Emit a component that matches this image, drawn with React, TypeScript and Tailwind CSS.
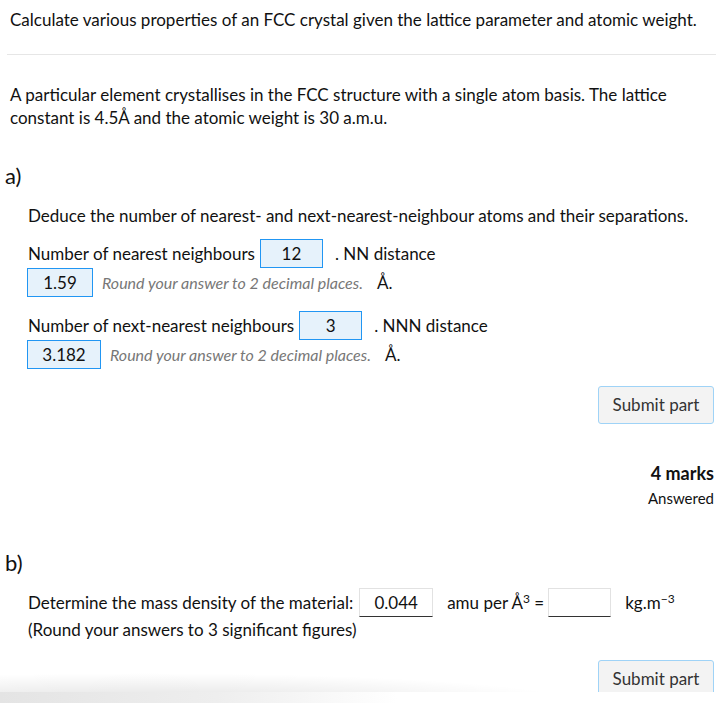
import React from "react";

function Box({ value, w }: { value: string; w: string }) {
  return (
    <span
      className={`inline-flex h-[29px] items-center justify-center border border-[#2196f3] bg-[#e6f2fb] text-[17px] text-[#111] ${w}`}
    >
      {value}
    </span>
  );
}

function SubmitButton() {
  return (
    <button className="h-[38px] w-[116px] rounded-[3px] border border-[#9fd3f7] bg-[#f3f3f3] text-[17px] text-[#333]">
      Submit part
    </button>
  );
}

export default function App() {
  return (
    <div className="relative h-[703px] w-[723px] overflow-hidden bg-white font-['Lato',sans-serif] text-[17px] text-[#111]">
      <div className="pl-[10px] pr-[9px]">
        <p className="pt-[8px] leading-[23px] whitespace-nowrap">
          Calculate various properties of an FCC crystal given the lattice parameter and atomic weight.
        </p>
        <div className="mt-[23px] ml-[-3px] mr-[-2px] h-px bg-[#e6e6e6]" />
        <p className="mt-[28px] leading-[23px]">
          A particular element crystallises in the FCC structure with a single atom basis. The lattice
          <br />
          constant is 4.5Å and the atomic weight is 30 a.m.u.
        </p>

        {/* Part a */}
        <div className="mt-[34px] ml-[-5px] text-[22px] leading-[26px]">a)</div>
        <div className="pl-[18px]">
          <p className="mt-[15px] leading-[23px] whitespace-nowrap">
            Deduce the number of nearest- and next-nearest-neighbour atoms and their separations.
          </p>
          <div className="mt-[12px]">
            <div className="flex h-[29px] items-center">
              <span>Number of nearest neighbours</span>
              <span className="ml-[5px]"><Box value="12" w="w-[63px]" /></span>
              <span className="ml-[12px]">. NN distance</span>
            </div>
            <div className="ml-[-1px] flex h-[29px] items-center">
              <Box value="1.59" w="w-[66px]" />
              <span className="ml-[9px] italic text-[#777] text-[16px]">Round your answer to 2 decimal places.</span>
              <span className="ml-[14px]">Å.</span>
            </div>
          </div>
          <div className="mt-[14px]">
            <div className="flex h-[29px] items-center">
              <span>Number of next-nearest neighbours</span>
              <span className="ml-[5px]"><Box value="3" w="w-[63px]" /></span>
              <span className="ml-[12px]">. NNN distance</span>
            </div>
            <div className="ml-[-1px] flex h-[29px] items-center">
              <Box value="3.182" w="w-[74px]" />
              <span className="ml-[9px] italic text-[#777] text-[16px]">Round your answer to 2 decimal places.</span>
              <span className="ml-[14px]">Å.</span>
            </div>
          </div>
        </div>
        <div className="mt-[17px] flex justify-end">
          <SubmitButton />
        </div>
        <div className="mt-[37px] flex flex-col items-end">
          <span className="text-[18px] font-bold leading-[24px]">4 marks</span>
          <span className="text-[15px] leading-[26px]">Answered</span>
        </div>

        {/* Part b */}
        <div className="mt-[39px] ml-[-5px] text-[22px] leading-[26px]">b)</div>
        <div className="pl-[18px]">
          <div className="mt-[12px] flex h-[29px] items-center whitespace-nowrap">
            <span>Determine the mass density of the material:</span>
            <span className="ml-[6px] inline-flex h-[29px] w-[74px] items-center justify-center border border-[#e2e2e2] border-b-[#333] bg-white">
              0.044
            </span>
            <span className="ml-[14px]">
              amu per Å<sup className="text-[12px]">3</sup> =
            </span>
            <span className="ml-[4px] inline-block h-[29px] w-[63px] border border-[#e2e2e2] border-b-[#333] bg-white" />
            <span className="ml-[14px]">
              kg.m<sup className="text-[12px]">−3</sup>
            </span>
          </div>
          <p className="leading-[26px]">(Round your answers to 3 significant figures)</p>
        </div>
        <div className="mt-[17px] flex justify-end">
          <SubmitButton />
        </div>
      </div>
      <div className="pointer-events-none absolute bottom-0 left-0 h-[30px] w-full bg-[radial-gradient(ellipse_60%_100%_at_20%_100%,rgba(0,0,0,0.12),rgba(0,0,0,0))]" />
      <div className="absolute bottom-0 left-0 h-[11px] w-full bg-[linear-gradient(to_right,#e4e4e4,#eeeeee_30%,#ffffff_55%)]" />
    </div>
  );
}
